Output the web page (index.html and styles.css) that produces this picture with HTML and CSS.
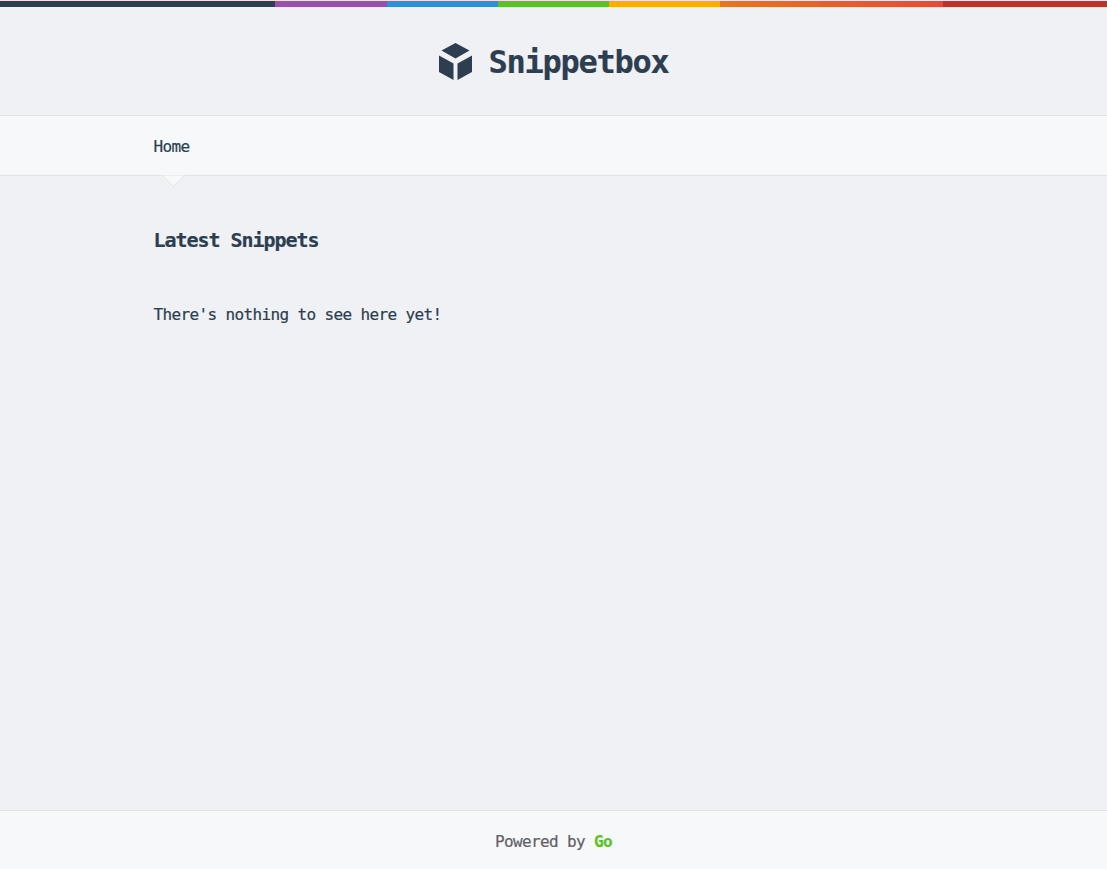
FILE: index.html
```
<!DOCTYPE html>
<html lang="en">
<head>
<meta charset="utf-8">
<title>Snippetbox</title>
<link rel="stylesheet" href="styles.css">
</head>
<body>
<header class="site-header">
  <h1 class="brand">
    <svg class="brand-icon" viewBox="0 0 33 37" aria-hidden="true"><path d="M16.5 0 L30.5 7.5 L16.5 15.5 L2.5 7.5 Z"/><path d="M0 12.5 L14.5 20.5 V37 L0 29 Z"/><path d="M33 12.5 L18.5 20.5 V37 L33 29 Z"/></svg>
    <span>Snippetbox</span>
  </h1>
</header>
<nav class="site-nav">
  <div class="container">
    <a class="nav-link live" href="#">Home</a>
  </div>
</nav>
<main class="container main">
  <h2 class="title">Latest Snippets</h2>
  <p class="message">There's nothing to see here yet!</p>
</main>
<footer class="site-footer">Powered by <a class="go" href="#">Go</a></footer>
</body>
</html>
```
FILE: styles.css
```
* { box-sizing: border-box; margin: 0; padding: 0; }
html, body { height: 100%; }
body {
  display: flex;
  flex-direction: column;
  min-height: 100vh;
  background: #eff1f5;
  color: #2c3e50;
  font-family: "DejaVu Sans Mono", monospace;
  font-size: 16px;
  letter-spacing: -0.63px;
  line-height: 27px;
  -webkit-text-stroke: 0.2px currentColor;
}
a { text-decoration: none; color: inherit; }
.site-header {
  height: 116px;
  padding-top: 38px;
  border-bottom: 1px solid #e1e3e6;
  background-image:
    linear-gradient(#f3dfe3, #f3dfe3),
    linear-gradient(to right, #2c3e50 24.85%, #9950ad 24.85%, #9950ad 35%, #2f8fd8 35%, #2f8fd8 45%, #5ac228 45%, #5ac228 55%, #ffab00 55%, #ffab00 65%, #e6761f 65%, #e64a36 85.2%, #bd3327 85.2%);
  background-size: 100% 1px, 100% 7px;
  background-repeat: no-repeat;
}
.brand {
  display: flex;
  justify-content: center;
  align-items: center;
  gap: 17px;
  font-size: 32px;
  letter-spacing: -1.27px;
  line-height: 48px;
  font-weight: 700;
}
.brand-icon { width: 33px; height: 37px; margin-bottom: 2px; fill: #2c3e50; }
.site-nav {
  height: 60px;
  padding-top: 17px;
  background: #f7f8fa;
  border-bottom: 1px solid #e1e3e6;
}
.container { width: 800px; margin: 0 auto; }
.nav-link { position: relative; display: inline-block; }
.nav-link.live::after {
  content: "";
  position: absolute;
  left: 11.5px;
  top: 34px;
  width: 16px;
  height: 16px;
  background: #f7f8fa;
  border-right: 1px solid #e1e3e6;
  border-bottom: 1px solid #e1e3e6;
  transform: rotate(45deg);
  clip-path: polygon(100% 0, 100% 100%, 0 100%);
}
.main { flex: 1; padding-top: 49px; }
.title {
  font-size: 20px;
  letter-spacing: -1.04px;
  line-height: 30px;
  font-weight: 700;
}
.message { margin-top: 46px; }
.site-footer {
  height: 59px;
  padding-top: 17px;
  text-align: center;
  background: #f7f8fa;
  border-top: 1px solid #e1e3e6;
  color: #5f6164;
}
.go { color: #5ac228; font-weight: 700; }
```
